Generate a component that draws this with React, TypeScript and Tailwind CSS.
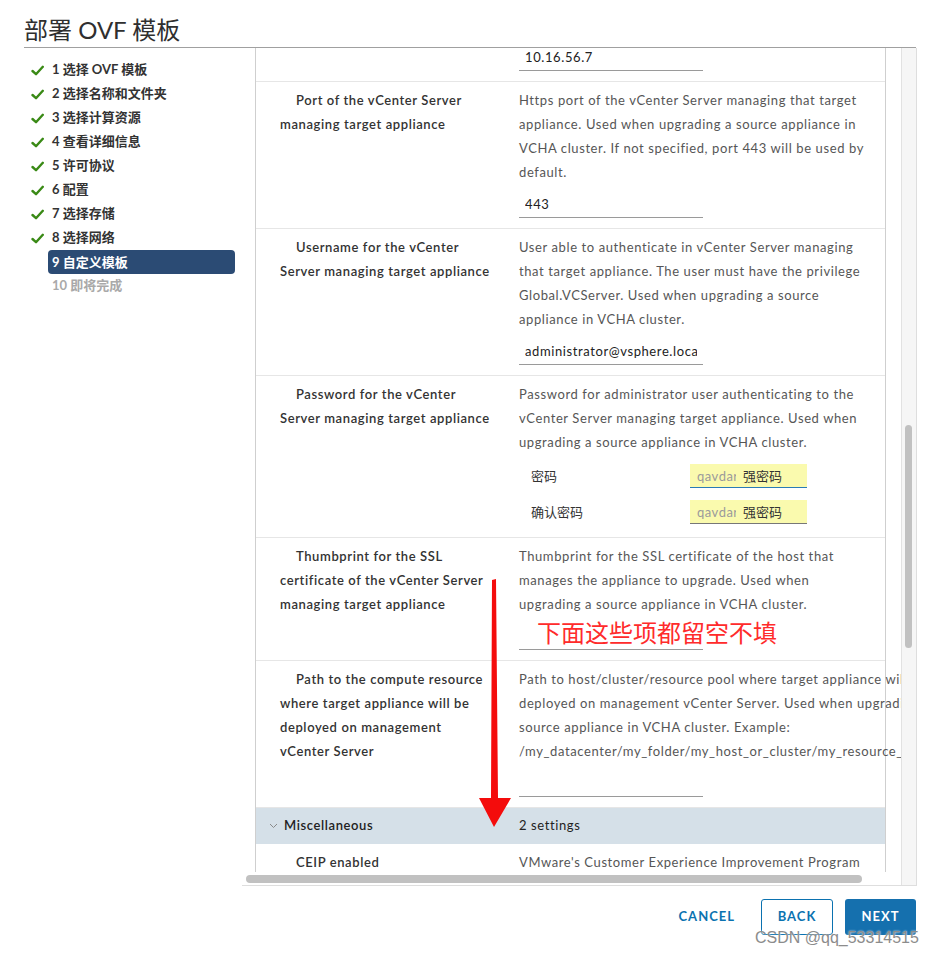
import React from "react";

type Row = {
    label: string[];
    desc: string[];
    value?: string;
    password?: boolean;
};

const rows: Row[] = [
    {
        label: ["Port of the vCenter Server", "managing target appliance"],
        desc: [
            "Https port of the vCenter Server managing that target",
            "appliance. Used when upgrading a source appliance in",
            "VCHA cluster. If not specified, port 443 will be used by",
            "default.",
        ],
        value: "443",
    },
    {
        label: ["Username for the vCenter", "Server managing target appliance"],
        desc: [
            "User able to authenticate in vCenter Server managing",
            "that target appliance. The user must have the privilege",
            "Global.VCServer. Used when upgrading a source",
            "appliance in VCHA cluster.",
        ],
        value: "administrator@vsphere.local",
    },
    {
        label: ["Password for the vCenter", "Server managing target appliance"],
        desc: [
            "Password for administrator user authenticating to the",
            "vCenter Server managing target appliance. Used when",
            "upgrading a source appliance in VCHA cluster.",
        ],
        password: true,
    },
    {
        label: ["Thumbprint for the SSL", "certificate of the vCenter Server", "managing target appliance"],
        desc: [
            "Thumbprint for the SSL certificate of the host that",
            "manages the appliance to upgrade. Used when",
            "upgrading a source appliance in VCHA cluster.",
        ],
        value: "",
    },
    {
        label: ["Path to the compute resource", "where target appliance will be", "deployed on management", "vCenter Server"],
        desc: [
            "Path to host/cluster/resource pool where target appliance will be",
            "deployed on management vCenter Server. Used when upgrading a",
            "source appliance in VCHA cluster. Example:",
            "/my_datacenter/my_folder/my_host_or_cluster/my_resource_pool",
        ],
        value: "",
    },
];

const steps = [
    "1 选择 OVF 模板",
    "2 选择名称和文件夹",
    "3 选择计算资源",
    "4 查看详细信息",
    "5 许可协议",
    "6 配置",
    "7 选择存储",
    "8 选择网络",
];

function Check() {
    return (
        <svg width="13" height="11" viewBox="0 0 13 11" className="block">
            <path d="M1.5 6 L5 9.2 L11.8 1.8" fill="none" stroke="#3a8a16" strokeWidth="2.4" strokeLinecap="round" strokeLinejoin="round" />
        </svg>
    );
}

function TextInput({ value }: { value: string }) {
    return (
        <div className="h-[26px] w-[184px] overflow-hidden whitespace-nowrap border-b border-[#9a9a9a] pl-[6px] pr-[6px] leading-[25px] text-[#222]">
            <div className="overflow-hidden">{value}</div>
        </div>
    );
}

function PasswordField({ label, focused }: { label: string; focused?: boolean }) {
    return (
        <div className="flex h-[24px] items-center tracking-normal">
            <div className="w-[171px] pl-[12px] text-[#333]">{label}</div>
            <div
                className={[
                    "flex h-[24px] w-[117px] items-center gap-[7px] bg-[#fafaae] pl-[7px] border-b",
                    focused ? "border-[#2a7bb6]" : "border-[#777]",
                ].join(" ")}
            >
                <span className="w-[39px] shrink-0 overflow-hidden whitespace-nowrap tracking-[0.5px] text-[#9b9b9b]">qavdar</span>
                <span className="text-[#333]">强密码</span>
            </div>
        </div>
    );
}

function SettingRow({ row }: { row: Row }) {
    return (
        <div className="flex border-b border-[#e6e6e6] pt-[6px] pb-[10px] leading-[24px]">
            <div className="w-[263px] shrink-0 pl-[24px] font-semibold text-[#333]">
                {row.label.map((l, i) => (
                    <div key={i} className={i === 0 ? "whitespace-nowrap pl-[16px]" : "whitespace-nowrap"}>
                        {l}
                    </div>
                ))}
            </div>
            <div className="flex-1">
                {row.desc.map((d, i) => (
                    <div key={i} className="whitespace-nowrap text-[#565656]">
                        {d}
                    </div>
                ))}
                {row.password ? (
                    <div className="mt-[10px] flex flex-col gap-[12px] pb-[3px]">
                        <PasswordField label="密码" focused />
                        <PasswordField label="确认密码" />
                    </div>
                ) : (
                    <div className="mt-[8px]">
                        <TextInput value={row.value ?? ""} />
                    </div>
                )}
            </div>
        </div>
    );
}

export default function App() {
    return (
        <div className="relative h-[956px] w-[940px] overflow-hidden bg-white font-['Lato','Noto_Sans_CJK_SC',sans-serif] text-[13px]">
            <div className="mx-[24px] border-b border-[#a0a0a0] pt-[14px] pb-[2px]">
                <h1 className="text-[24px] leading-[31px] text-[#2f2f2f]">部署 OVF 模板</h1>
            </div>

            <div className="flex">
                {/* steps */}
                <div className="w-[242px] shrink-0 pt-[10px] pl-[24px]">
                    {steps.map((s) => (
                        <div key={s} className="flex h-[24px] items-center">
                            <span className="flex w-[24px] justify-end pr-[4px]">
                                <Check />
                            </span>
                            <span className="pl-[4px] font-bold text-[#333]">{s}</span>
                        </div>
                    ))}
                    <div className="flex h-[24px] items-center">
                        <span className="w-[24px]" />
                        <span className="mr-[7px] h-[24px] flex-1 rounded-[4px] bg-[#2b4b74] pl-[4px] font-bold leading-[24px] text-white">
                            9 自定义模板
                        </span>
                    </div>
                    <div className="flex h-[24px] items-center">
                        <span className="w-[24px]" />
                        <span className="pl-[4px] font-bold text-[#a9a9a9]">10 即将完成</span>
                    </div>
                </div>

                {/* settings grid */}
                <div className="flex h-[838px] w-[675px] border-r border-b border-[#dedede] tracking-[0.6px]">
                    <div className="flex w-[660px] flex-col">
                        <div className="h-[825px] overflow-hidden pl-[13px]">
                            <div className="box-border h-[825px] w-[631px] border-l border-r border-b border-[#cfcfcf]">
                                <div className="flex h-[34px] items-end border-b border-[#e6e6e6] pb-[10px] pl-[263px]">
                                    <TextInput value="10.16.56.7" />
                                </div>
                                {rows.map((r, i) => (
                                    <SettingRow key={i} row={r} />
                                ))}
                                <div className="flex h-[36px] items-center bg-[#d5e0e8]">
                                    <div className="flex w-[263px] shrink-0 items-center pl-[13px] font-semibold text-[#222]">
                                        <svg width="9" height="6" viewBox="0 0 9 6" className="mr-[6px]">
                                            <path d="M1 1 L4.5 4.5 L8 1" fill="none" stroke="#8a8a8a" strokeWidth="1" />
                                        </svg>
                                        Miscellaneous
                                    </div>
                                    <div className="text-[#222]">2 settings</div>
                                </div>
                                <div className="flex pt-[6px] leading-[24px]">
                                    <div className="w-[263px] shrink-0 pl-[40px] font-semibold text-[#333]">CEIP enabled</div>
                                    <div className="whitespace-nowrap text-[#565656]">
                                        VMware's Customer Experience Improvement Program
                                    </div>
                                </div>
                            </div>
                        </div>
                        <div className="h-[13px] pt-[3px] pl-[4px]">
                            <div className="h-[8px] w-[616px] rounded-full bg-[#c1c1c1]" />
                        </div>
                    </div>
                    <div className="w-[15px] border-l border-[#e2e2e2] bg-[#f6f6f6]">
                        <div className="mt-[377px] ml-[3px] h-[223px] w-[7px] rounded-full bg-[#c1c1c1]" />
                    </div>
                </div>
            </div>

            {/* footer buttons */}
            <div className="mt-[13px] flex items-center justify-end pr-[24px] text-[13px] font-bold tracking-[1px]">
                <button type="button" className="mr-[14px] h-[36px] px-[12px] text-[#0b72b0]">
                    CANCEL
                </button>
                <button type="button" className="mr-[12px] h-[36px] w-[72px] rounded-[3px] border border-[#0b72b0] text-[#0b72b0]">
                    BACK
                </button>
                <button type="button" className="h-[36px] w-[71px] rounded-[3px] bg-[#1570ae] text-white">
                    NEXT
                </button>
            </div>

            {/* annotation */}
            <svg className="absolute left-[476px] top-[576px]" width="40" height="252" viewBox="0 0 40 252">
                <polygon points="16,4 20,3 22,222 35,222 18,251 3,222 15,222" fill="#f40c0c" />
            </svg>
            <div className="absolute left-[537px] top-[615px] font-['Noto_Sans_CJK_SC',sans-serif] text-[24px] leading-[34px] text-[#ff2b2b]">
                下面这些项都留空不填
            </div>
            <div className="absolute left-[755px] top-[928px] font-['Liberation_Sans',sans-serif] text-[16px] leading-[20px] text-[#8c8c8c] [text-shadow:0_0_2px_#fff]">
                CSDN @qq_53314515
            </div>
        </div>
    );
}
